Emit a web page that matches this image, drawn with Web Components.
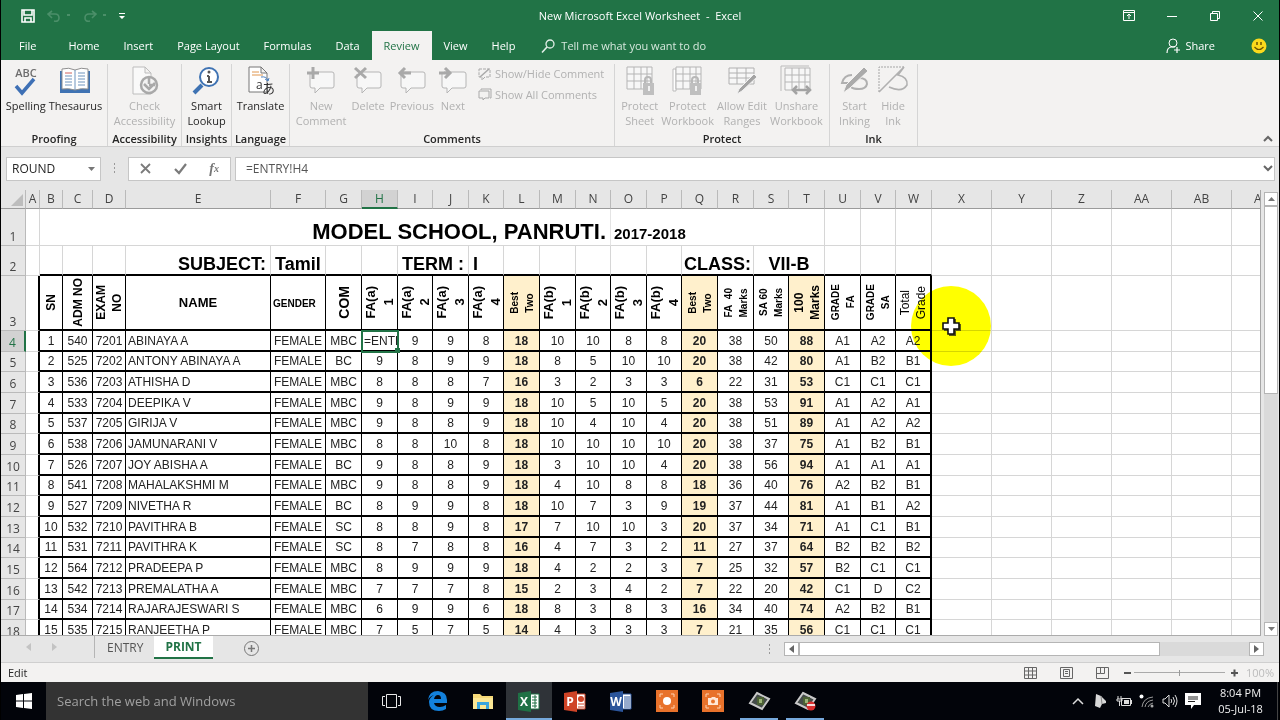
<!DOCTYPE html>
<html lang="en">
<head>
<meta charset="utf-8">
<meta name="viewport" content="width=device-width, initial-scale=1">
<title>New Microsoft Excel Worksheet - Excel</title>
<style>
    html, body {
        margin: 0;
        height: 100%;
    }

    body {
        display: flex;
        flex-direction: column;
        box-sizing: border-box;
        border: solid #000;
        border-width: 0 1px;
        overflow: hidden;
        background: #e6e6e6;
        color: #262626;
        font: 11px/15px "Open Sans", "Noto Sans", sans-serif;
    }
</style>
</head>
<body>
<title-bar>New Microsoft Excel Worksheet&nbsp; -&nbsp; Excel</title-bar>

<menu-bar>
    <menu-tab first>File</menu-tab>
    <menu-tab>Home</menu-tab>
    <menu-tab>Insert</menu-tab>
    <menu-tab>Page Layout</menu-tab>
    <menu-tab>Formulas</menu-tab>
    <menu-tab>Data</menu-tab>
    <menu-tab active>Review</menu-tab>
    <menu-tab>View</menu-tab>
    <menu-tab>Help</menu-tab>
</menu-bar>

<ribbon-bar>
    <ribbon-group label="Proofing" style="--width: 107px">
        <ribbon-button icon="spelling">Spelling</ribbon-button>
        <ribbon-button icon="thesaurus">Thesaurus</ribbon-button>
    </ribbon-group>
    <ribbon-group label="Accessibility" style="--width: 74px">
        <ribbon-button icon="check" disabled>Check<br>Accessibility</ribbon-button>
    </ribbon-group>
    <ribbon-group label="Insights" style="--width: 50px">
        <ribbon-button icon="lookup">Smart<br>Lookup</ribbon-button>
    </ribbon-group>
    <ribbon-group label="Language" style="--width: 58px">
        <ribbon-button icon="translate">Translate</ribbon-button>
    </ribbon-group>
    <ribbon-group label="Comments" style="--width: 325px; --gap: 5px">
        <ribbon-button icon="comment-new" disabled>New<br>Comment</ribbon-button>
        <ribbon-button icon="comment-delete" disabled>Delete</ribbon-button>
        <ribbon-button icon="comment-prev" disabled>Previous</ribbon-button>
        <ribbon-button icon="comment-next" disabled>Next</ribbon-button>
        <ribbon-stack>
            <ribbon-button icon="comment-hide" small disabled>Show/Hide Comment</ribbon-button>
            <ribbon-button icon="comment-all" small disabled>Show All Comments</ribbon-button>
        </ribbon-stack>
    </ribbon-group>
    <ribbon-group label="Protect" style="--width: 215px">
        <ribbon-button icon="protect-sheet" disabled>Protect<br>Sheet</ribbon-button>
        <ribbon-button icon="protect-book" disabled>Protect<br>Workbook</ribbon-button>
        <ribbon-button icon="ranges" disabled>Allow Edit<br>Ranges</ribbon-button>
        <ribbon-button icon="unshare" disabled>Unshare<br>Workbook</ribbon-button>
    </ribbon-group>
    <ribbon-group label="Ink" style="--width: 88px; --gap: 8px">
        <ribbon-button icon="ink-start" disabled>Start<br>Inking</ribbon-button>
        <ribbon-button icon="ink-hide" disabled>Hide<br>Ink</ribbon-button>
    </ribbon-group>
</ribbon-bar>

<formula-bar cell="ROUND" formula="=ENTRY!H4"></formula-bar>
<sheet-grid></sheet-grid>

<sheet-tabs>
    <sheet-tab>ENTRY</sheet-tab>
    <sheet-tab active>PRINT</sheet-tab>
</sheet-tabs>

<status-bar>Edit</status-bar>

<task-bar>
    <task-item icon="taskview" label="Task View"></task-item>
    <task-item icon="edge" label="Edge"></task-item>
    <task-item icon="folder" label="File Explorer"></task-item>
    <task-item icon="excel" label="Excel" active></task-item>
    <task-item icon="powerpoint" label="PowerPoint"></task-item>
    <task-item icon="word" label="Word"></task-item>
    <task-item icon="recorder" label="Recorder"></task-item>
    <task-item icon="camera" label="Camera"></task-item>
    <task-item icon="studio" label="Studio" running></task-item>
    <task-item icon="studio-rec" label="Studio recording" running></task-item>
</task-bar>

<script>
// every icon: [width, height, svg content]
const bubble = 'M5 5h20q2 0 2 2v12q0 2-2 2H13l-5 5v-5H5q-2 0-2-2V7'
const gridLines = '<path d="M1 1h25v22H1zM1 8h25M1 15h25M8 1v22M15 1v22M21 1v22" fill="#f7f7f7" stroke="#b5b5b5"/>'
const lock = '<path d="M19 17v-3q0-3 3-3t3 3v3" fill="none" stroke="#b8b8b8" stroke-width="2"/><path d="M17 17h11v12H17z" fill="#bfbfbf"/><path d="M22 20h2v5h-2z" fill="#f1f1f1"/>'
const office = (color, letter, page) => `
    <path d="M11 4h10v15H11z" fill="#fff" stroke="${color}"/>${page}
    <path d="M0 3l13-2v21L0 20z" fill="${color}"/>
    <text x="6" y="16" text-anchor="middle" font-family="Open Sans, sans-serif" font-weight="700" font-size="12" fill="#fff">${letter}</text>`
const studio = `
    <path d="M8 2l12 6-7 10L1 12z" fill="#444b49" stroke="#c9c9c9" stroke-width="2"/>
    <path d="M8 6h7v8H8z" fill="#4c6135"/><path d="M10 8h3v4h-3z" fill="#9bb477"/>`

const icons = {
    save: [14, 14, '<path d="M1 1h12v12H1z M3 1v5h8V1M4 13V9h6v4" fill="none" stroke="#fff" stroke-width="1.6"/>'],
    undo: [14, 12, '<path d="M5 1L1 4l4 4M1 4h7q4 0 4 4t-5 3" fill="none" stroke="#4b8f69" stroke-width="1.6"/>'],
    redo: [14, 12, '<path d="M9 1l4 3-4 4M13 4H6q-4 0-4 4t5 3" fill="none" stroke="#4b8f69" stroke-width="1.6"/>'],
    dot: [5, 4, '<path d="M1 0h3v2H1z" fill="#4b8f69"/>'],
    customize: [6, 6, '<path d="M0 0h6v1H0zM0 3h6L3 6z" fill="#fff"/>'],
    display: [12, 11, '<path d="M.5.5h11v10H.5zM.5 2.500h11M6 9V4M4 6l2-2 2 2" fill="none" stroke="#fff"/>'],
    minimize: [10, 10, '<path d="M0 5.500h10" stroke="#fff"/>'],
    restore: [10, 10, '<path d="M.5 2.500h7v7h-7zM2.500 2V.5h7v7H8" fill="none" stroke="#fff"/>'],
    close: [10, 10, '<path d="M.5.5l9 9M9.500.5l-9 9" stroke="#fff"/>'],
    search: [14, 14, '<circle cx="9" cy="5" r="4" fill="none" stroke="#e3efe8" stroke-width="1.300"/><path d="M6 8l-5 5.500" stroke="#e3efe8" stroke-width="1.600"/>'],
    share: [15, 16, '<circle cx="7" cy="5" r="4" fill="none" stroke="#fff"/><path d="M1 15q0-6 5-6h3M11 9v6M8 12h6" fill="none" stroke="#fff" stroke-width="1.200"/>'],
    smiley: [16, 16, '<circle cx="8" cy="8" r="7.500" fill="#fbd91c"/><path d="M6 4v3M10 4v3" stroke="#6c5200" stroke-width="1.500"/><path d="M3.500 9q4.500 5 9 0" fill="none" stroke="#6c5200" stroke-width="1.200"/>'],
    spelling: [28, 30, '<text x="14" y="11" text-anchor="middle" font-family="Open Sans, sans-serif" font-size="11" font-weight="600" fill="#6d6d6d">ABC</text><path d="M4 20l6 7L22 13" fill="none" stroke="#3e70b5" stroke-width="3.500"/>'],
    thesaurus: [30, 30, '<path d="M0 5h30v22H0z" fill="#3f73b3"/><path d="M2 3q7-2 13 1 6-3 13-1v20q-7-1-13 1-6-2-13-1z" fill="#fff" stroke="#8f8f8f"/><path d="M15 4v20M5 10h7M5 13h7M5 16h7M5 19h7M18 7h7M18 10h7M18 13h7M18 16h7M18 19h7" stroke="#6f94bd"/><path d="M5 7h7" stroke="#d0615a"/>'],
    check: [28, 30, '<path d="M2 1h12l6 6v21H2zM14 1v6h6" fill="#f9f9f9" stroke="#bdbdbd"/><circle cx="18" cy="19" r="8" fill="#f3f3f3" stroke="#a9a9a9" stroke-width="2.500"/><path d="M18 12v6M13 18l5 5 6-6M18 19h6" fill="none" stroke="#a9a9a9" stroke-width="2.500"/>'],
    lookup: [28, 30, '<path d="M2 27l8-8" stroke="#3f73b3" stroke-width="4"/><circle cx="17" cy="11" r="9" fill="#fff" stroke="#3f73b3" stroke-width="2"/><path d="M17 10v6M15 16h5M15 10h2" stroke="#555" stroke-width="2"/><circle cx="17" cy="6" r="1.500" fill="#555"/>'],
    translate: [28, 30, '<path d="M2 1h12l6 6v19H2zM14 1v6h6" fill="#fff" stroke="#777"/><path d="M5 6h7M5 9h11" stroke="#e0964e"/><path d="M14 11q6-1 7 4M18 13l3 2 1-3" fill="none" stroke="#4b7fc0"/><text x="9" y="23" font-family="Open Sans, sans-serif" font-size="12" fill="#333">a</text><text x="15" y="27" font-family="Noto Sans CJK JP, sans-serif" font-size="13" fill="#333">あ</text>'],
    'comment-new': [28, 28, `<path d="${bubble}V7" fill="#f7f7f7" stroke="#b5b5b5"/><path d="M6 0v12M0 6h12" stroke="#a9a9a9" stroke-width="3"/>`],
    'comment-delete': [28, 28, `<path d="${bubble}V7" fill="#f7f7f7" stroke="#b5b5b5"/><path d="M1 1l11 10M12 1L1 11" stroke="#a9a9a9" stroke-width="3"/>`],
    'comment-prev': [28, 28, `<path d="${bubble}V7" fill="#f7f7f7" stroke="#b5b5b5"/><path d="M13 6H2M7 1L2 6l5 5" fill="none" stroke="#a9a9a9" stroke-width="3"/>`],
    'comment-next': [28, 28, `<path d="${bubble}V7" fill="#f7f7f7" stroke="#b5b5b5"/><path d="M0 6h11M6 1l5 5-5 5" fill="none" stroke="#a9a9a9" stroke-width="3"/>`],
    'comment-hide': [14, 14, '<path d="M1 2h11v8H7l-3 3v-3H1z" fill="none" stroke="#a9a9a9" stroke-dasharray="3 1"/><path d="M2 10l9-8" stroke="#a9a9a9" stroke-width="1.500"/>'],
    'comment-all': [14, 14, '<path d="M3 2V1h10v9h-1M1 3h10v7H7l-2 2v-2H1z" fill="none" stroke="#a9a9a9"/>'],
    'protect-sheet': [28, 30, gridLines + lock],
    'protect-book': [30, 30, '<path d="M0 3h3v22h-3z" fill="#fff" stroke="#bbb"/>' + `<g transform="translate(2)">${gridLines}</g>` + lock],
    ranges: [29, 30, '<path d="M1 2h25v16H1zM1 7h25M1 12h25M9 2v16M18 2v16" fill="#f7f7f7" stroke="#b0b0b0"/><path d="M9 28l2-5L26 8l3 3-15 14z" fill="#a3a3a3" stroke="#f1f1f1"/>'],
    unshare: [30, 30, `<path d="M0 25V0h28" fill="none" stroke="#bbb"/><g transform="translate(3 1)">${gridLines}</g><path d="M12 24h17M16 20l-4 4 4 4M25 20l4 4-4 4" fill="none" stroke="#a3a3a3" stroke-width="2.500"/>`],
    'ink-start': [30, 30, '<path d="M12 9Q4 9 2 17h7M19 12q8 0 8 6-1 5-8 5-6 0-8-2" fill="none" stroke="#b0b0b0" stroke-width="2"/><path d="M3 27l3-8L24 1l4 4L10 22z" fill="#aaa" stroke="#f3f2f1"/>'],
    'ink-hide': [30, 30, '<path d="M1 26V1h25" fill="none" stroke="#a5a5a5" stroke-dasharray="2 1"/><path d="M1 26L26 1l-6 8q10 2 9 10-5 8-18 2" fill="none" stroke="#b0b0b0" stroke-width="1.600"/>'],
    up: [10, 7, '<path d="M1 6l4-4 4 4" fill="none" stroke="#666" stroke-width="2"/>'],
    down: [10, 7, '<path d="M1 1l4 4 4-4" fill="none" stroke="#666" stroke-width="2"/>'],
    'tri-down': [7, 4, '<path d="M0 0h7L3.500 4z" fill="#777"/>'],
    'tri-up': [7, 4, '<path d="M0 4h7L3.500 0z" fill="#777"/>'],
    'tri-left': [5, 8, '<path d="M5 0v8L0 4z" fill="currentColor"/>'],
    'tri-right': [5, 8, '<path d="M0 0v8l5-4z" fill="currentColor"/>'],
    grip: [3, 14, '<path d="M1 1h1v2H1zM1 5h1v2H1zM1 9h1v2H1z" fill="#999"/>'],
    cancel: [12, 12, '<path d="M1 1l9 9M10 1l-9 9" stroke="#7b7b7b" stroke-width="1.800"/>'],
    accept: [13, 12, '<path d="M1 6l4 4 7-9" fill="none" stroke="#7b7b7b" stroke-width="2.200"/>'],
    corner: [12, 12, '<path d="M12 0v12H0z" fill="#bdbdbd"/>'],
    add: [15, 15, '<circle cx="7.500" cy="7.500" r="7" fill="none" stroke="#777"/><path d="M7.500 4v7M4 7.500h7" stroke="#777" stroke-width="1.500"/>'],
    normal: [13, 12, '<path d="M.5.5h12v11H.5zM.5 4h12M.5 8h12M4.500.5v11M8.500.5v11" fill="none" stroke="#666"/>'],
    layout: [13, 12, '<path d="M.5.5h12v11H.5zM3.500 2.500h6v7h-6zM5 4.500h3M5 6.500h3" fill="none" stroke="#666"/>'],
    breaks: [13, 12, '<path d="M.5.5h12v11H.5zM4.500.5v6h4v-6M.5 6.500h4" fill="none" stroke="#666"/>'],
    minus: [7, 8, '<path d="M0 4h7" stroke="#555" stroke-width="2"/>'],
    plus: [7, 8, '<path d="M0 4h7M3.500.5v7" stroke="#555" stroke-width="2"/>'],
    cross: [22, 22, '<path d="M8 3h7v5h5v7h-5v5H8v-5H3V8h5z" fill="#5c5a12"/><path d="M7 2h6v5h5v6h-5v5H7v-5H2V7h5z" fill="#fff" stroke="#111" stroke-width="1.600"/>'],
    windows: [16, 16, '<path d="M0 2l7-1v6.500H0zM8 1l8-1v7.500H8zM0 8.500h7V15l-7-1zM8 8.500h8V16l-8-1z" fill="#fff"/>'],
    taskview: [19, 14, '<path d="M4.500.5h10v13h-10zM3 2.500H.5v9H3M16 2.500h2.500v9H16" fill="none" stroke="#e8e8e8"/>'],
    edge: [20, 20, '<path d="M1 9Q2 0 11 0q9 1 9 9v3H7q1 4 6 4 3 0 6-2v4q-3 2-7 2-10 0-10-9 0-4 5-7Q3 5 1 9zM7 8h7q0-4-3-4t-4 4z" fill="#1381dc"/>'],
    folder: [20, 17, '<path d="M0 1h7l2 2h11v13H0z" fill="#f6d978"/><path d="M0 5h20v11H0z" fill="#fbe795"/><path d="M4 16V9h12v7h-3v-4H7v4z" fill="#39a5de"/>'],
    excel: [22, 22, office('#1f7145', 'X', '<path d="M14 7h5M14 10h5M14 13h5M14 16h5M17 5v13" stroke="#1f7145"/>')],
    powerpoint: [22, 22, office('#cf4427', 'P', '<path d="M14 14h6M14 17h6" stroke="#cf4427"/><circle cx="17" cy="9" r="3" fill="#cf4427"/>')],
    word: [22, 22, office('#2b559b', 'W', '<path d="M14 7h6M14 9h6M14 11h6M14 13h6M14 15h6M14 17h6" stroke="#2b559b"/>')],
    recorder: [22, 22, '<path d="M0 0h22v22H0z" fill="#e8722b"/><circle cx="11" cy="11" r="4" fill="#fff"/><path d="M4 7V4h3M15 4h3v3M18 15v3h-3M7 18H4v-3" fill="none" stroke="#ffd2b2"/>'],
    camera: [22, 22, '<path d="M0 0h22v22H0z" fill="#e8722b"/><path d="M6 8h3l1-1h3l1 1h2v7H6z" fill="#ffe7d6"/><circle cx="11" cy="11.500" r="2" fill="#e8722b"/><path d="M4 7V4h3M15 4h3v3M18 15v3h-3M7 18H4v-3" fill="none" stroke="#ffd2b2"/>'],
    studio: [21, 20, studio],
    'studio-rec': [21, 20, studio + '<circle cx="16" cy="15" r="4.500" fill="#d92f2f"/><path d="M12 14h8" stroke="#f6dada" stroke-width="2"/>'],
    chevron: [12, 8, '<path d="M1 7l5-5 5 5" fill="none" stroke="#ddd" stroke-width="1.500"/>'],
    bell: [13, 14, '<path d="M2 0l5 2 5 5v2l-4 1-2 4-5-2z" fill="#d8d8d8"/><path d="M7 2l1 8" stroke="#888"/>'],
    battery: [16, 12, '<path d="M5.500 3.500h9v7h-9zM2 1v3M5 1v3M1 4h5v2H1zM3.500 6v5" fill="none" stroke="#ddd"/><path d="M8 5h5v4H8zM15 5h1v4h-1z" fill="#ddd"/>'],
    wifi: [15, 14, '<circle cx="2.500" cy="2.500" r="2" fill="#fff"/><path d="M3 13Q4 4 14 3M6 13q1-6 8-7M9 13q1-3 5-4" fill="none" stroke="#999"/><circle cx="13" cy="12" r="1.500" fill="#aaa"/>'],
    speaker: [16, 14, '<path d="M1 5h2l4-4v12L3 9H1z" fill="none" stroke="#ddd"/><path d="M9 5q1.500 2 0 4M11 3q3 4 0 8M13 1q4 6 0 12" fill="none" stroke="#ddd"/>'],
    message: [16, 16, '<path d="M0 0h16v12H9l-3 4v-4H0z" fill="#fff"/><path d="M3 4h10M3 6h10M3 8.500h7" stroke="#222"/>']
}

// base class: puts the markup and the styles of an element in its shadow root
class BaseElement extends HTMLElement {
    constructor() {
        super()
        this.attachShadow({ mode: 'open' })
    }

    connectedCallback() {
        this.shadowRoot.innerHTML = `
            <style>
                * { box-sizing: border-box; }
                button, input { margin: 0; padding: 0; border: 0; background: none; color: inherit; font: inherit; outline: none; }
                button { display: flex; align-items: center; justify-content: center; }
            </style>
            ${this.render()}`
    }
}

class AppIcon extends BaseElement {
    render() {
        const [width, height, content] = icons[this.getAttribute('name')]
        return `
            <style>
                :host { display: inline-flex; flex: none; }
                svg { display: block; overflow: visible; }
            </style>
            <svg width="${width}" height="${height}" viewBox="0 0 ${width} ${height}" aria-hidden="true">${content}</svg>`
    }
}

class TitleBar extends BaseElement {
    render() {
        return `
            <style>
                :host { display: grid; grid-template-columns: 1fr auto 1fr; align-items: center; height: 31px; flex: none; background: #217346; color: #fff; }
                .quick { display: flex; align-items: center; gap: 5px; padding-left: 20px; }
                .gap { margin-left: 7px; }
                .window { display: flex; justify-content: flex-end; }
                .window button { width: 43px; height: 28px; }
            </style>
            <div class="quick">
                <button aria-label="Save"><app-icon name="save"></app-icon></button>
                <button class="gap" aria-label="Undo"><app-icon name="undo"></app-icon></button>
                <app-icon name="dot"></app-icon>
                <button class="gap" aria-label="Redo"><app-icon name="redo"></app-icon></button>
                <app-icon name="dot"></app-icon>
                <button class="gap" aria-label="Customize"><app-icon name="customize"></app-icon></button>
            </div>
            <div><slot></slot></div>
            <div class="window">
                <button aria-label="Ribbon display options"><app-icon name="display"></app-icon></button>
                <button aria-label="Minimize"><app-icon name="minimize"></app-icon></button>
                <button aria-label="Restore"><app-icon name="restore"></app-icon></button>
                <button aria-label="Close"><app-icon name="close"></app-icon></button>
            </div>`
    }
}

class MenuTab extends BaseElement {
    render() {
        return `
            <style>
                :host { display: flex; }
                :host([first]) { padding: 0 8px 0 6px; }
                button { padding: 0 12px; }
                :host([active]) button { background: #f3f2f1; color: #217346; }
            </style>
            <button role="tab"><slot></slot></button>`
    }
}

class MenuBar extends BaseElement {
    render() {
        return `
            <style>
                :host { display: flex; height: 29px; flex: none; background: #217346; color: #fff; }
                label { display: flex; flex: 1; align-items: center; gap: 6px; padding-left: 14px; }
                input { flex: 1; }
                input::placeholder { color: #d6e8dd; opacity: 1; }
                .share { gap: 4px; margin-right: 36px; }
                .smile { margin-right: 12px; }
            </style>
            <slot></slot>
            <label><app-icon name="search"></app-icon><input aria-label="Tell me" placeholder="Tell me what you want to do"></label>
            <button class="share"><app-icon name="share"></app-icon>Share</button>
            <button class="smile" aria-label="Feedback"><app-icon name="smiley"></app-icon></button>`
    }
}

class RibbonBar extends BaseElement {
    render() {
        return `
            <style>
                :host { display: flex; height: 87px; flex: none; box-sizing: border-box; background: #f3f2f1; border-bottom: 1px solid #cfcfcf; }
                button { margin: auto 6px 4px auto; }
            </style>
            <slot></slot>
            <button aria-label="Collapse the ribbon"><app-icon name="up"></app-icon></button>`
    }
}

class RibbonGroup extends BaseElement {
    render() {
        return `
            <style>
                :host { display: flex; flex-direction: column; box-sizing: border-box; width: var(--width); flex: none; margin-top: 4px; border-right: 1px solid #d5d5d5; }
                .buttons { display: flex; flex: 1; justify-content: center; gap: var(--gap, 3px); }
                .label { text-align: center; font-weight: 600; }
            </style>
            <div class="buttons"><slot></slot></div>
            <div class="label">${this.getAttribute('label')}</div>`
    }
}

class RibbonStack extends BaseElement {
    render() {
        return `
            <style>
                :host { display: flex; flex-direction: column; gap: 6px; padding: 2px 4px 0 6px; }
            </style>
            <slot></slot>`
    }
}

class RibbonButton extends BaseElement {
    render() {
        return `
            <style>
                :host { display: block; }
                button { flex-direction: column; white-space: nowrap; }
                button:disabled { color: #b1b1b1; }
                .icon { display: flex; height: 34px; align-items: center; }
                :host([small]) button { flex-direction: row; gap: 3px; }
                :host([small]) .icon { height: 15px; }
            </style>
            <button ${this.hasAttribute('disabled') ? 'disabled' : ''}>
                <span class="icon"><app-icon name="${this.getAttribute('icon')}"></app-icon></span>
                <span><slot></slot></span>
            </button>`
    }
}

class FormulaBar extends BaseElement {
    render() {
        return `
            <style>
                :host { display: flex; align-items: center; height: 43px; flex: none; padding: 0 4px 0 5px; box-sizing: border-box; font-size: 12px; }
                .box { display: flex; align-items: center; height: 24px; background: #fff; border: 1px solid #c6c6c6; }
                .name { width: 95px; padding: 0 5px; }
                .name input { width: 100%; min-width: 0; }
                .grip { margin: 0 12px; }
                .tools { width: 103px; justify-content: space-around; margin-right: 4px; }
                .fx { font: italic 700 14px "Liberation Serif", serif; color: #777; }
                .fx small { font-size: 10px; }
                .formula { flex: 1; padding: 0 1px 0 10px; }
                .formula input { flex: 1; color: #555; }
            </style>
            <div class="box name">
                <input aria-label="Name box" value="${this.getAttribute('cell')}">
                <button aria-label="Names"><app-icon name="tri-down"></app-icon></button>
            </div>
            <app-icon class="grip" name="grip"></app-icon>
            <div class="box tools">
                <button aria-label="Cancel"><app-icon name="cancel"></app-icon></button>
                <button aria-label="Enter"><app-icon name="accept"></app-icon></button>
                <button class="fx" aria-label="Insert function">f<small>x</small></button>
            </div>
            <div class="box formula">
                <input aria-label="Formula" value="${this.getAttribute('formula')}">
                <button aria-label="Expand"><app-icon name="down"></app-icon></button>
            </div>`
    }
}

const columns = {
    A: 14, B: 23, C: 30, D: 33, E: 145, F: 55, G: 36, H: 36, I: 35, J: 36, K: 35, L: 36,
    M: 36, N: 35, O: 36, P: 35, Q: 36, R: 36, S: 35, T: 36, U: 36, V: 35, W: 36,
    X: 60, Y: 60, Z: 60, AA: 60, AB: 60, AC: 60
}

const headings = [
    ['SN', 12], ['ADM NO', 12], ['EXAM<br>NO', 12], ['NAME', 13, 'flat'], ['GENDER', 10, 'flat name'], ['COM', 14],
    ['FA(a)<br>1', 13], ['FA(a)<br>2', 13], ['FA(a)<br>3', 13], ['FA(a)<br>4', 13], ['Best<br>Two', 10],
    ['FA(b)<br>1', 13], ['FA(b)<br>2', 13], ['FA(b)<br>3', 13], ['FA(b)<br>4', 13], ['Best<br>Two', 10],
    ['FA&nbsp; 40<br>Marks', 10], ['SA 60<br>Marks', 10], ['100<br>Marks', 12],
    ['GRADE<br>FA', 10], ['GRADE<br>SA', 10], ['Total<br>Grade', 12, 'light']
]

const students = [
    '1,540,7201,ABINAYA A,FEMALE,MBC,=ENTRY!H4,9,9,8,18,10,10,8,8,20,38,50,88,A1,A2,A2',
    '2,525,7202,ANTONY ABINAYA A,FEMALE,BC,9,8,9,9,18,8,5,10,10,20,38,42,80,A1,B2,B1',
    '3,536,7203,ATHISHA D,FEMALE,MBC,8,8,8,7,16,3,2,3,3,6,22,31,53,C1,C1,C1',
    '4,533,7204,DEEPIKA V,FEMALE,MBC,9,8,9,9,18,10,5,10,5,20,38,53,91,A1,A2,A1',
    '5,537,7205,GIRIJA V,FEMALE,MBC,9,8,8,9,18,10,4,10,4,20,38,51,89,A1,A2,A2',
    '6,538,7206,JAMUNARANI V,FEMALE,MBC,8,8,10,8,18,10,10,10,10,20,38,37,75,A1,B2,B1',
    '7,526,7207,JOY ABISHA A,FEMALE,BC,9,8,8,9,18,3,10,10,4,20,38,56,94,A1,A1,A1',
    '8,541,7208,MAHALAKSHMI M,FEMALE,MBC,9,8,8,9,18,4,10,8,8,18,36,40,76,A2,B2,B1',
    '9,527,7209,NIVETHA R,FEMALE,BC,8,9,9,8,18,10,7,3,9,19,37,44,81,A1,B1,A2',
    '10,532,7210,PAVITHRA B,FEMALE,SC,8,8,9,8,17,7,10,10,3,20,37,34,71,A1,C1,B1',
    '11,531,7211,PAVITHRA K,FEMALE,SC,8,7,8,8,16,4,7,3,2,11,27,37,64,B2,B2,B2',
    '12,564,7212,PRADEEPA P,FEMALE,MBC,8,9,9,9,18,4,2,2,3,7,25,32,57,B2,C1,C1',
    '13,542,7213,PREMALATHA A,FEMALE,MBC,7,7,7,8,15,2,3,4,2,7,22,20,42,C1,D,C2',
    '14,534,7214,RAJARAJESWARI S,FEMALE,MBC,6,9,9,6,18,8,3,8,3,16,34,40,74,A2,B2,B1',
    '15,535,7215,RANJEETHA P,FEMALE,MBC,7,5,7,5,14,4,3,3,3,7,21,35,56,C1,C1,C1'
]

class SheetGrid extends BaseElement {
    render() {
        const names = Object.keys(columns)
        const total = Object.values(columns).reduce((sum, width) => sum + width, 25)
        const blank = count => '<td></td>'.repeat(count)
        const isSum = index => [10, 15, 18].includes(index)

        const head = headings.map(([text, size, kind = ''], index) =>
            `<th scope="col" class="cell ${kind} ${isSum(index) ? 'sum' : ''}"><span class="s${size}">${text}</span></th>`).join('')

        const rows = students.map((line, row) => {
            const cells = line.split(',').map((value, index) => {
                if (value[0] === '=') {
                    return `<td class="cell edit"><input aria-label="H4" value="${value}"></td>`
                }
                return `<td class="cell ${index === 3 ? 'name' : ''} ${isSum(index) ? 'sum' : ''}">${value}</td>`
            }).join('')
            return `<tr><th scope="row" class="${row === 0 ? 'current' : ''}">${row + 4}</th><td class="edge"></td>${cells}${blank(6)}</tr>`
        }).join('')

        return `
            <style>
                :host { display: flex; flex: 1; min-height: 0; overflow: hidden; }
                .sheet { position: relative; flex: 1; min-width: 0; overflow: hidden; background: #fff; border-right: 1px solid #a6a6a6; border-bottom: 1px solid #ababab; }
                table { table-layout: fixed; width: ${total}px; border-collapse: separate; border-spacing: 0; font: 12px/16px "Liberation Sans", Arial, sans-serif; color: #222; }
                th, td { padding: 0; border: solid #d6d6d6; border-width: 0 1px 1px 0; text-align: center; white-space: nowrap; overflow: hidden; }
                thead th, tbody th[scope=row] { background: #e6e6e6; border-color: #bababa; color: #444; font: 12px/16px "Open Sans", "Noto Sans", sans-serif; }
                thead th { height: 19px; border-bottom-color: #9b9b9b; }
                thead th.current { background: #d2d2d2; border-bottom: 2px solid #217346; color: #217346; }
                thead app-icon { display: flex; justify-content: flex-end; padding: 2px 2px 0; }
                tbody th[scope=row] { vertical-align: bottom; }
                tbody th[scope=row].current { background: #d2d2d2; border-right: 2px solid #217346; color: #217346; }
                tbody.marks tr { height: 21px; }
                tbody.marks tr:nth-child(3n + 2) { height: 20px; }
                .title { height: 37px; }
                .info { height: 30px; }
                .head { height: 55px; }
                .title td, .info td { vertical-align: bottom; font-weight: 700; color: #000; }
                .title .school { font-size: 22px; line-height: 26px; text-align: right; padding: 0 4px 0 0; border-right-color: #e4e4e4; }
                .title .year { font-size: 15px; line-height: 22px; text-align: left; padding-left: 3px; }
                .info td { font-size: 18px; line-height: 20px; }
                .info td.ruled { border-bottom: 2px solid #000; }
                .info .right { text-align: right; padding-right: 4px; }
                .info .left { text-align: left; padding-left: 4px; }
                .cell { border-color: #000; border-bottom-width: 2px; }
                .cell:nth-last-child(7) { border-right-width: 2px; }
                .edge { border-right: 2px solid #000; }
                .head .cell { color: #000; }
                .cell span { display: inline-block; vertical-align: middle; writing-mode: vertical-rl; transform: rotate(180deg); line-height: 18px; text-align: center; }
                .cell.flat span { writing-mode: horizontal-tb; transform: none; }
                .light { font-weight: 400; }
                .cell .s10 { font-size: 10px; line-height: 15px; }
                .cell .s12 { font-size: 12px; line-height: 16px; }
                .cell .s13 { font-size: 13px; }
                .cell .s14 { font-size: 14px; }
                .name { text-align: left; padding-left: 2px; }
                .sum { background: #fff0cc; font-weight: 700; }
                .edit { position: relative; overflow: visible; outline: 2px solid #217346; outline-offset: -1px; }
                .edit input { display: block; width: 100%; padding-left: 2px; }
                .edit::after { content: ""; position: absolute; right: -3px; bottom: -3px; width: 5px; height: 5px; background: #217346; }
                .halo { position: absolute; left: 910px; top: 96px; width: 80px; height: 80px; border-radius: 50%; background: #ff0; mix-blend-mode: multiply; }
                .pointer { position: absolute; left: 940px; top: 126px; }
                .scroll { display: flex; flex-direction: column; width: 14px; margin: 2px 1px 0 3px; background: #dadada; flex: none; }
                .scroll button, .thumb { background: #fff; border: 1px solid #b5b5b5; }
                .scroll button { height: 14px; }
                .thumb { height: 188px; margin-bottom: auto; }
            </style>
            <div class="sheet">
                <table>
                    <colgroup><col style="width: 25px">${names.map(name => `<col style="width: ${columns[name]}px">`).join('')}</colgroup>
                    <thead>
                        <tr><th><app-icon name="corner"></app-icon></th>${names.map(name => `<th scope="col" class="${name === 'H' ? 'current' : ''}">${name}</th>`).join('')}</tr>
                    </thead>
                    <tbody>
                        <tr class="title"><th scope="row">1</th><td></td><td class="school" colspan="13">MODEL SCHOOL, PANRUTI.</td><td class="year" colspan="6">2017-2018</td>${blank(9)}</tr>
                        <tr class="info">
                            <th scope="row">2</th><td></td>${'<td class="ruled"></td>'.repeat(3)}
                            <td class="ruled right">SUBJECT:</td><td class="ruled left">Tamil</td>
                            <td class="ruled"></td><td class="ruled"></td>
                            <td class="ruled left" colspan="2">TERM :</td><td class="ruled left">I</td>
                            ${'<td class="ruled"></td>'.repeat(5)}
                            <td class="ruled" colspan="2">CLASS:</td><td class="ruled" colspan="2">VII-B</td>
                            ${'<td class="ruled"></td>'.repeat(3)}${blank(6)}
                        </tr>
                        <tr class="head"><th scope="row">3</th><td class="edge"></td>${head}${blank(6)}</tr>
                    </tbody>
                    <tbody class="marks">${rows}</tbody>
                </table>
                <div class="halo"></div>
                <app-icon class="pointer" name="cross"></app-icon>
            </div>
            <div class="scroll">
                <button aria-label="Scroll up"><app-icon name="tri-up"></app-icon></button>
                <div class="thumb"></div>
                <button aria-label="Scroll down"><app-icon name="tri-down"></app-icon></button>
            </div>`
    }
}

class SheetTab extends BaseElement {
    render() {
        return `
            <style>
                :host { display: flex; height: 23px; color: #555; }
                button { padding: 0 11px; }
                :host([active]) button { background: #fff; color: #217346; font-weight: 700; border-bottom: 2px solid #217346; }
            </style>
            <button role="tab"><slot></slot></button>`
    }
}

class SheetTabs extends BaseElement {
    render() {
        return `
            <style>
                :host { display: flex; height: 26px; flex: none; font-size: 12px; }
                nav { display: flex; gap: 21px; align-items: center; width: 94px; height: 22px; margin-right: 1px; padding-left: 25px; border-right: 1px solid #b5b5b5; color: #c3c3c3; }
                .add { height: 25px; margin-left: 31px; }
                .grip { margin: 7px 13px 0 auto; }
                .scroll { display: flex; width: 480px; height: 14px; margin: 6px 15px 0 0; background: #dadada; color: #666; }
                .scroll button, .thumb { background: #fff; border: 1px solid #b5b5b5; }
                .scroll button { width: 15px; }
                .thumb { width: 361px; margin-right: auto; }
            </style>
            <nav>
                <button aria-label="Previous sheet"><app-icon name="tri-left"></app-icon></button>
                <button aria-label="Next sheet"><app-icon name="tri-right"></app-icon></button>
            </nav>
            <slot></slot>
            <button class="add" aria-label="New sheet"><app-icon name="add"></app-icon></button>
            <app-icon class="grip" name="grip"></app-icon>
            <div class="scroll">
                <button aria-label="Scroll left"><app-icon name="tri-left"></app-icon></button>
                <div class="thumb"></div>
                <button aria-label="Scroll right"><app-icon name="tri-right"></app-icon></button>
            </div>`
    }
}

class StatusBar extends BaseElement {
    render() {
        return `
            <style>
                :host { display: flex; align-items: center; height: 20px; flex: none; box-sizing: border-box; padding: 0 5px 0 7px; background: #f3f2f1; border-top: 1px solid #cfcfcf; }
                .views { display: flex; gap: 23px; margin: 0 15px 0 auto; }
                input { appearance: none; width: 91px; height: 9px; margin: 0 6px 0 3px; background: linear-gradient(#aaa, #aaa) center / 100% 1px no-repeat; }
                input::-webkit-slider-thumb { appearance: none; width: 1px; height: 6px; background: #999; }
                output { margin-left: 8px; color: #bbb; }
            </style>
            <span><slot></slot></span>
            <div class="views">
                <button aria-label="Normal"><app-icon name="normal"></app-icon></button>
                <button aria-label="Page layout"><app-icon name="layout"></app-icon></button>
                <button aria-label="Page break preview"><app-icon name="breaks"></app-icon></button>
            </div>
            <button aria-label="Zoom out"><app-icon name="minus"></app-icon></button>
            <input type="range" aria-label="Zoom" min="0" max="200" value="100">
            <button aria-label="Zoom in"><app-icon name="plus"></app-icon></button>
            <output>100%</output>`
    }
}

class TaskItem extends BaseElement {
    render() {
        return `
            <style>
                :host { display: flex; width: 46px; justify-content: center; }
                :host([active]) { background: #2f3338; }
                button { width: 38px; border: solid transparent; border-width: 2px 0; }
                :host([active]) button { width: 46px; }
                :host([active]) button, :host([running]) button { border-bottom-color: #76a9dc; }
            </style>
            <button aria-label="${this.getAttribute('label')}"><app-icon name="${this.getAttribute('icon')}"></app-icon></button>`
    }
}

class TaskBar extends BaseElement {
    render() {
        const tray = ['chevron', 'bell', 'battery', 'wifi', 'speaker', 'message']
        return `
            <style>
                :host { display: flex; height: 38px; flex: none; background: #02040a; color: #f0f0f0; }
                .start { width: 45px; }
                .search { width: 322px; padding-left: 11px; background: #333; font-size: 13px; }
                .search::placeholder { color: #a0a0a0; opacity: 1; }
                .tray { display: flex; flex: none; margin-left: auto; }
                .tray button { width: 23px; flex: none; }
                .tray .clock { width: 73px; flex-direction: column; line-height: 16px; white-space: nowrap; }
                .tray .desktop { width: 2px; border-left: 1px solid #444; }
            </style>
            <button class="start" aria-label="Start"><app-icon name="windows"></app-icon></button>
            <input class="search" aria-label="Search" placeholder="Search the web and Windows">
            <slot></slot>
            <div class="tray">
                ${tray.map(name => `<button aria-label="${name}"><app-icon name="${name}"></app-icon></button>`).join('')}
                <button class="clock"><span>8:04 PM</span><span>05-Jul-18</span></button>
                <button class="desktop" aria-label="Show desktop"></button>
            </div>`
    }
}

customElements.define('app-icon', AppIcon)
customElements.define('title-bar', TitleBar)
customElements.define('menu-tab', MenuTab)
customElements.define('menu-bar', MenuBar)
customElements.define('ribbon-bar', RibbonBar)
customElements.define('ribbon-group', RibbonGroup)
customElements.define('ribbon-stack', RibbonStack)
customElements.define('ribbon-button', RibbonButton)
customElements.define('formula-bar', FormulaBar)
customElements.define('sheet-grid', SheetGrid)
customElements.define('sheet-tab', SheetTab)
customElements.define('sheet-tabs', SheetTabs)
customElements.define('status-bar', StatusBar)
customElements.define('task-item', TaskItem)
customElements.define('task-bar', TaskBar)
</script>
</body>
</html>
